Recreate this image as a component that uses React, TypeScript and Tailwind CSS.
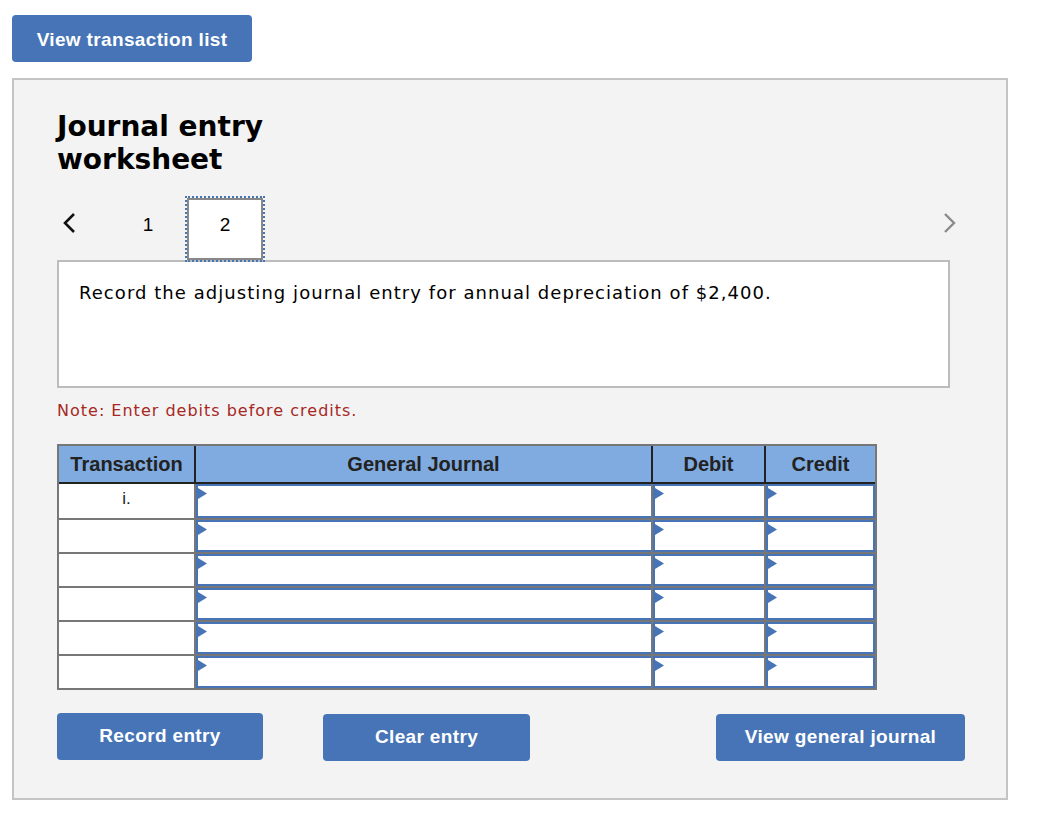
import React from 'react'

const rows = ['i.', '', '', '', '', '']

function Flag() {
  return (
    <svg className="absolute left-0 top-[2px]" width="9" height="11" viewBox="0 0 9 11">
      <polygon points="0,0 9,5.5 0,11" fill="#4674b7" />
    </svg>
  )
}

function InputCell({ width, last }: { width: string; last?: boolean }) {
  return (
    <div className={`${width} h-full border-l-2 border-[#777]`}>
      <div
        className={`relative h-full bg-white border-l-2 border-t-2 border-b-2 border-[#4674b7] ${last ? 'border-r-2' : ''}`}
      >
        <Flag />
      </div>
    </div>
  )
}

export default function App() {
  const sans = { fontFamily: '"Liberation Sans", Arial, sans-serif' }
  const verdana = { fontFamily: '"DejaVu Sans", Verdana, sans-serif' }

  return (
    <div className="w-[1044px] h-[820px] bg-white pl-[12px] pt-[15px]" style={sans}>
      <button className="w-[240px] h-[47px] rounded-[4px] bg-[#4674b7] text-white font-bold text-[19px] tracking-[0.35px] pt-[3px]">
        View transaction list
      </button>

      <div className="mt-[16px] w-[996px] h-[722px] border-2 border-[#c4c4c4] bg-[#f3f3f3] pl-[43px] pt-[30px]">
        <h1 className="text-[28px] leading-[33px] font-bold text-black" style={verdana}>
          Journal entry
          <br />
          worksheet
        </h1>

        {/* tabs */}
        <div className="mt-[20px] flex items-stretch h-[66px] w-[900px]">
          <div className="w-[48px] h-full flex items-start pt-[16px] pl-[5px]">
            <svg width="14" height="22" viewBox="0 0 14 22">
              <polyline points="12,2 3,11 12,20" fill="none" stroke="#111" strokeWidth="2.6" />
            </svg>
          </div>
          <div className="w-[80px] h-full flex justify-center pt-[15px] text-[19px] text-black pl-[6px]">1</div>
          <div className="w-[80px] h-full border-2 border-dotted border-[#4674b7] p-0">
            <div className="h-full border-2 border-[#888] bg-white flex justify-center pt-[11px] text-[19px] text-black">
              2
            </div>
          </div>
          <div className="flex-1" />
          <div className="w-[14px] h-full flex items-start pt-[16px]">
            <svg width="14" height="22" viewBox="0 0 14 22">
              <polyline points="2,2 11,11 2,20" fill="none" stroke="#8a8a8a" strokeWidth="2.4" />
            </svg>
          </div>
        </div>

        {/* question */}
        <div
          className="-mt-[2px] w-[893px] h-[128px] border-2 border-[#bcbcbc] bg-white pl-[20px] pt-[17px] text-[18px] tracking-[1.05px] text-black"
          style={verdana}
        >
          Record the adjusting journal entry for annual depreciation of $2,400.
        </div>

        <p className="mt-[12px] text-[16px] tracking-[1px] text-[#a6281f] leading-[22px]" style={verdana}>
          Note: Enter debits before credits.
        </p>

        {/* journal table */}
        <div className="mt-[22px] w-[820px] border-2 border-[#777] bg-white">
          <div className="flex h-[38px] bg-[#80abe0] border-b-2 border-[#222] text-[20px] font-bold text-[#222]">
            <div className="w-[135px] flex items-center justify-center">Transaction</div>
            <div className="w-[457px] border-l-2 border-[#222] flex items-center justify-center">General Journal</div>
            <div className="w-[113px] border-l-2 border-[#222] flex items-center justify-center">Debit</div>
            <div className="flex-1 border-l-2 border-[#222] flex items-center justify-center">Credit</div>
          </div>
          {rows.map((r, i) => (
            <div key={i} className={`flex h-[34px] ${i > 0 ? 'border-t-2 border-[#777]' : ''}`}>
              <div className="w-[135px] h-full flex justify-center pt-[5px] text-[17px] text-[#222] leading-[20px]">
                {r}
              </div>
              <InputCell width="w-[457px]" />
              <InputCell width="w-[113px]" />
              <InputCell width="flex-1" last />
            </div>
          ))}
        </div>

        {/* actions */}
        <div className="mt-[23px] flex items-start text-white font-bold text-[19px] tracking-[0.35px]">
          <button className="w-[206px] h-[47px] rounded-[4px] bg-[#4674b7]">Record entry</button>
          <button className="ml-[60px] mt-[1px] w-[207px] h-[47px] rounded-[4px] bg-[#4674b7]">Clear entry</button>
          <button className="ml-[186px] mt-[1px] w-[249px] h-[47px] rounded-[4px] bg-[#4674b7]">
            View general journal
          </button>
        </div>
      </div>
    </div>
  )
}
